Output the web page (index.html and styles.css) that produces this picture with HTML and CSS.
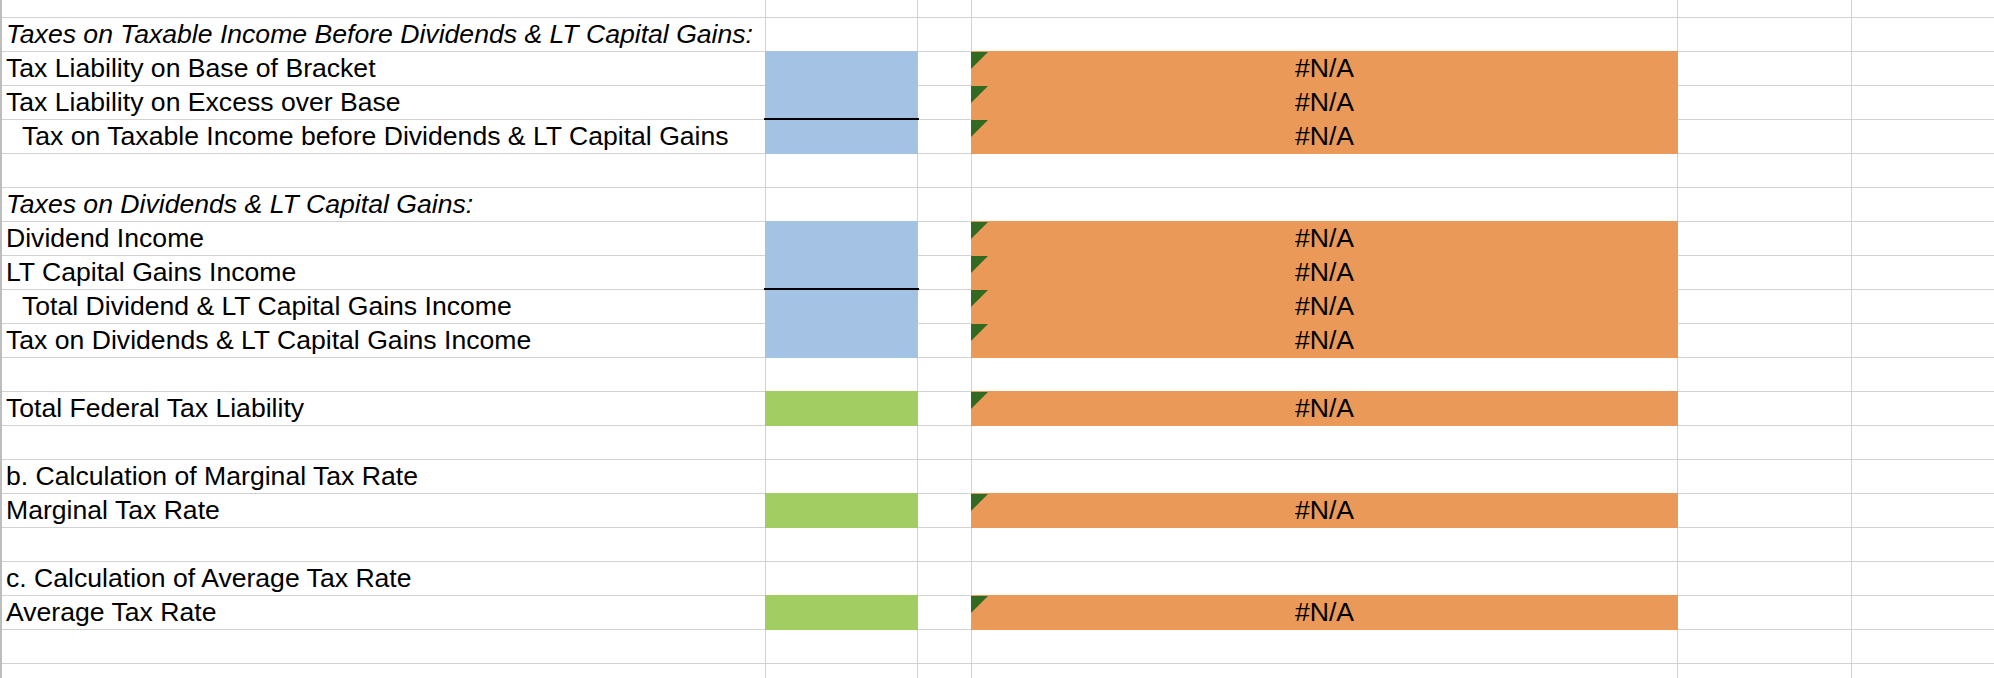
FILE: index.html
```html
<!DOCTYPE html>
<html lang="en">
<head>
<meta charset="utf-8">
<title>Tax Calculation</title>
<link rel="stylesheet" href="styles.css">
</head>
<body>
<div class="sheet">
  <div class="row first"><div class="c"></div><div class="c"></div><div class="c"></div><div class="c"></div><div class="c"></div><div class="c"></div></div>

  <div class="row"><div class="c it">Taxes on Taxable Income Before Dividends &amp; LT Capital Gains:</div><div class="c"></div><div class="c"></div><div class="c"></div><div class="c"></div><div class="c"></div></div>
  <div class="row"><div class="c">Tax Liability on Base of Bracket</div><div class="c blue"></div><div class="c"></div><div class="c orange">#N/A</div><div class="c"></div><div class="c"></div></div>
  <div class="row"><div class="c">Tax Liability on Excess over Base</div><div class="c blue under"></div><div class="c"></div><div class="c orange">#N/A</div><div class="c"></div><div class="c"></div></div>
  <div class="row"><div class="c indent">Tax on Taxable Income before Dividends &amp; LT Capital Gains</div><div class="c blue"></div><div class="c"></div><div class="c orange">#N/A</div><div class="c"></div><div class="c"></div></div>
  <div class="row"><div class="c"></div><div class="c"></div><div class="c"></div><div class="c"></div><div class="c"></div><div class="c"></div></div>

  <div class="row"><div class="c it">Taxes on Dividends &amp; LT Capital Gains:</div><div class="c"></div><div class="c"></div><div class="c"></div><div class="c"></div><div class="c"></div></div>
  <div class="row"><div class="c">Dividend Income</div><div class="c blue"></div><div class="c"></div><div class="c orange">#N/A</div><div class="c"></div><div class="c"></div></div>
  <div class="row"><div class="c">LT Capital Gains Income</div><div class="c blue under"></div><div class="c"></div><div class="c orange">#N/A</div><div class="c"></div><div class="c"></div></div>
  <div class="row"><div class="c indent">Total Dividend &amp; LT Capital Gains Income</div><div class="c blue"></div><div class="c"></div><div class="c orange">#N/A</div><div class="c"></div><div class="c"></div></div>
  <div class="row"><div class="c">Tax on Dividends &amp; LT Capital Gains Income</div><div class="c blue"></div><div class="c"></div><div class="c orange">#N/A</div><div class="c"></div><div class="c"></div></div>
  <div class="row"><div class="c"></div><div class="c"></div><div class="c"></div><div class="c"></div><div class="c"></div><div class="c"></div></div>

  <div class="row"><div class="c">Total Federal Tax Liability</div><div class="c green"></div><div class="c"></div><div class="c orange">#N/A</div><div class="c"></div><div class="c"></div></div>
  <div class="row"><div class="c"></div><div class="c"></div><div class="c"></div><div class="c"></div><div class="c"></div><div class="c"></div></div>

  <div class="row"><div class="c">b. Calculation of Marginal Tax Rate</div><div class="c"></div><div class="c"></div><div class="c"></div><div class="c"></div><div class="c"></div></div>
  <div class="row"><div class="c">Marginal Tax Rate</div><div class="c green"></div><div class="c"></div><div class="c orange">#N/A</div><div class="c"></div><div class="c"></div></div>
  <div class="row"><div class="c"></div><div class="c"></div><div class="c"></div><div class="c"></div><div class="c"></div><div class="c"></div></div>

  <div class="row"><div class="c">c. Calculation of Average Tax Rate</div><div class="c"></div><div class="c"></div><div class="c"></div><div class="c"></div><div class="c"></div></div>
  <div class="row"><div class="c">Average Tax Rate</div><div class="c green"></div><div class="c"></div><div class="c orange">#N/A</div><div class="c"></div><div class="c"></div></div>
  <div class="row"><div class="c"></div><div class="c"></div><div class="c"></div><div class="c"></div><div class="c"></div><div class="c"></div></div>
  <div class="row"><div class="c"></div><div class="c"></div><div class="c"></div><div class="c"></div><div class="c"></div><div class="c"></div></div>
</div>
</body>
</html>
```

FILE: styles.css
```css
html, body {
  margin: 0;
  padding: 0;
  background: #ffffff;
  overflow: hidden;
}

.sheet {
  display: flex;
  flex-direction: column;
  gap: 1px;
  background: #d2d2d2;
  border-left: 2px solid #bdbdbd;
  width: 1992px;
  font-family: "Liberation Sans", Arial, sans-serif;
  font-size: 26.6px;
  color: #000000;
}

.row {
  display: grid;
  grid-template-columns: 763px 151px 53px 705px 173px 1fr;
  column-gap: 1px;
  height: 33px;
  flex: none;
}

.row.first {
  height: 17px;
}

.c {
  position: relative;
  background: #ffffff;
  display: flex;
  align-items: flex-end;
  padding: 0 4px 2px 4px;
  line-height: 30px;
  white-space: nowrap;
  min-width: 0;
}

.it {
  font-style: italic;
}

.indent {
  padding-left: 20px;
}

.blue {
  background: #a4c2e4;
  box-shadow: 0 0 0 1px #a4c2e4;
}

.green {
  background: #a2cd62;
  box-shadow: 0 0 0 1px #a2cd62;
}

.orange {
  background: #ea9958;
  box-shadow: 0 0 0 1px #ea9958;
  justify-content: center;
}

.orange::before {
  content: "";
  position: absolute;
  top: 0;
  left: -1px;
  width: 17px;
  height: 17px;
  background: #336a22;
  clip-path: polygon(0 0, 100% 0, 0 100%);
  z-index: 1;
}

.under::after {
  content: "";
  position: absolute;
  left: -2px;
  right: -2px;
  bottom: -1px;
  height: 2px;
  background: #000000;
  z-index: 1;
}
```
